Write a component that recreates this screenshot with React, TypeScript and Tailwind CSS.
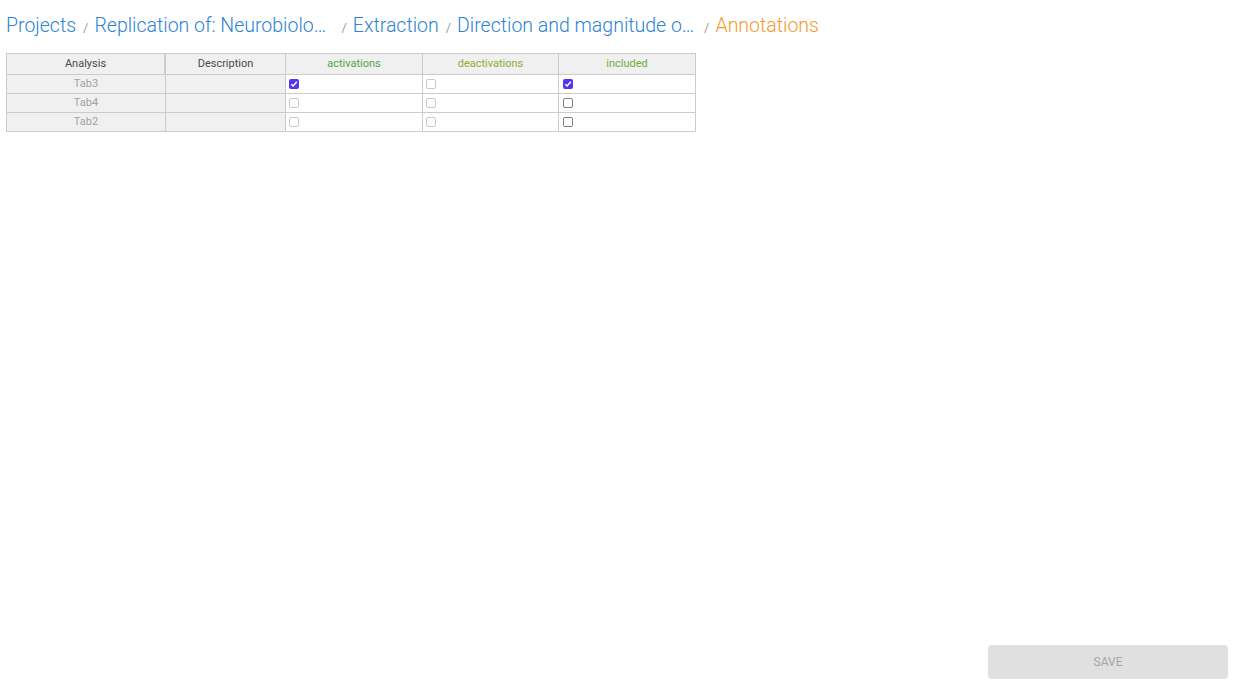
import React from "react";

type Cell = "checked" | "off" | "offEnabled";

function Box({ state }: { state: Cell }) {
  if (state === "checked") {
    return (
      <span className="flex h-[10px] w-[10px] items-center justify-center rounded-[2px] bg-[#5136f2]">
        <svg width="8" height="8" viewBox="0 0 8 8">
          <path d="M1.3 4.2 L3.1 6 L6.8 1.8" fill="none" stroke="#fff" strokeWidth="1.5" />
        </svg>
      </span>
    );
  }
  return (
    <span
      className={
        "block h-[10px] w-[10px] rounded-[2px] border bg-white " +
        (state === "offEnabled" ? "border-[#808080]" : "border-[#c9c9c9]")
      }
    />
  );
}

const rows: { name: string; a: Cell; d: Cell; i: Cell }[] = [
  { name: "Tab3", a: "checked", d: "off", i: "checked" },
  { name: "Tab4", a: "off", d: "off", i: "offEnabled" },
  { name: "Tab2", a: "off", d: "off", i: "offEnabled" },
];

function Sep() {
  return <span className="pl-[7px] pr-[6px] text-[13px] font-normal text-[#9e9e9e]">/</span>;
}

export default function App() {
  return (
    <div className="flex h-[684px] w-full flex-col bg-white font-['Roboto',sans-serif]">
      <div className="flex-1">
        <nav className="flex items-baseline whitespace-nowrap pl-[6px] pt-[13px] text-[19.5px] font-light leading-[26px] text-[#2b84d4]">
          <span>Projects</span>
          <Sep />
          <span className="inline-block w-[240px]">Replication of: Neurobiolo…</span>
          <Sep />
          <span>Extraction</span>
          <Sep />
          <span className="inline-block w-[240px]">Direction and magnitude o…</span>
          <Sep />
          <span className="text-[#f69a2a]">Annotations</span>
        </nav>

        <div className="ml-[6px] mt-[12px] grid w-max grid-cols-[159px_120px_137px_136px_137px] border-l border-t border-[#cccccc] text-[11px]">
          <div className="flex h-[21px] items-center justify-center border-b border-r-2 border-[#cccccc] bg-[#f0f0f0] text-[#4a4a4a]">
            Analysis
          </div>
          <div className="flex h-[21px] items-center justify-center border-b border-r border-[#cccccc] bg-[#f0f0f0] text-[#4a4a4a]">
            Description
          </div>
          <div className="flex h-[21px] items-center justify-center border-b border-r border-[#cccccc] bg-[#f0f0f0] text-[#4ea93f]">
            activations
          </div>
          <div className="flex h-[21px] items-center justify-center border-b border-r border-[#cccccc] bg-[#f0f0f0] text-[#8aae36]">
            deactivations
          </div>
          <div className="flex h-[21px] items-center justify-center border-b border-r border-[#cccccc] bg-[#f0f0f0] text-[#6fae3c]">
            included
          </div>
          {rows.map((r) => (
            <React.Fragment key={r.name}>
              <div className="flex h-[19px] items-center justify-center border-b border-r border-[#cccccc] bg-[#f0f0f0] text-[#a3a3a3]">
                {r.name}
              </div>
              <div className="h-[19px] border-b border-r border-[#cccccc] bg-[#f0f0f0]" />
              <div className="flex h-[19px] items-center border-b border-r border-[#cccccc] bg-white pl-[3px]">
                <Box state={r.a} />
              </div>
              <div className="flex h-[19px] items-center border-b border-r border-[#cccccc] bg-white pl-[3px]">
                <Box state={r.d} />
              </div>
              <div className="flex h-[19px] items-center border-b border-r border-[#cccccc] bg-white pl-[4px]">
                <Box state={r.i} />
              </div>
            </React.Fragment>
          ))}
        </div>
      </div>

      <div className="flex justify-end pb-[5px] pr-[16px]">
        <button
          disabled
          className="h-[34px] w-[240px] rounded-[4px] bg-[#e0e0e0] text-[12px] uppercase text-[#a6a6a6]"
        >
          Save
        </button>
      </div>
    </div>
  );
}
